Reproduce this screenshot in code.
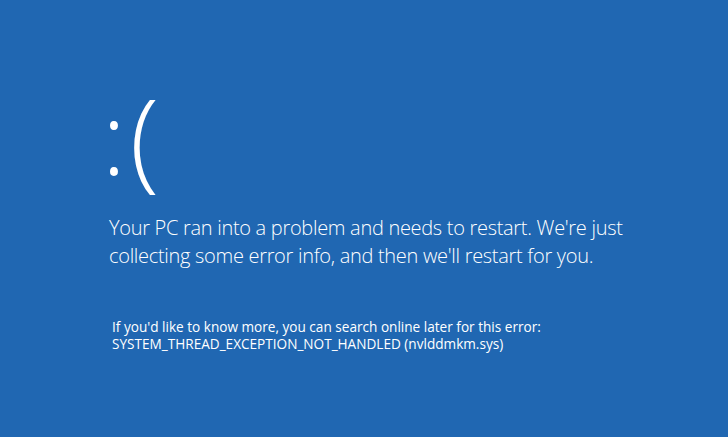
import React from 'react'

export default function App() {
  return (
    <div className="w-[728px] h-[437px] bg-[#2067b2] text-white overflow-hidden font-['Open_Sans',sans-serif]">
      <div className="pt-[83px]">
        <div className="pl-[102px] h-[110px] text-[108px] leading-none font-light whitespace-nowrap">
          <span className="text-[100px] align-[3px]">:</span>
          <span className="ml-[4px]">(</span>
        </div>
        <p className="mt-[21px] pl-[109px] text-[20px] leading-[28px] font-light tracking-[-0.3px]">
          Your PC ran into a problem and needs to restart. We're just
          <br />
          collecting some error info, and then we'll restart for you.
        </p>
        <div className="mt-[48px] pl-[112px] text-[13.6px] leading-[17px]">
          <p>If you'd like to know more, you can search online later for this error:</p>
          <p>SYSTEM_THREAD_EXCEPTION_NOT_HANDLED (nvlddmkm.sys)</p>
        </div>
      </div>
    </div>
  )
}
